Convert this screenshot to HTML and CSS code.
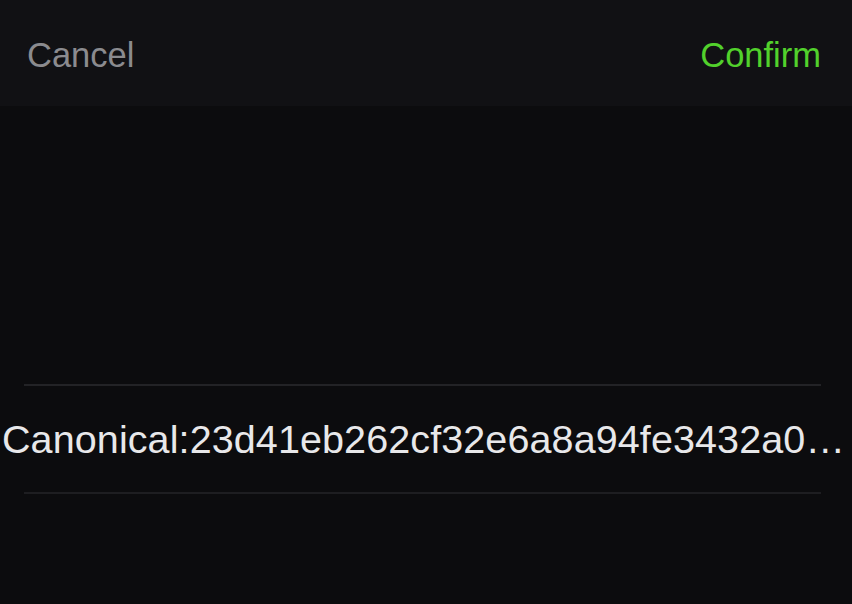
FILE: index.html
```html
<!DOCTYPE html>
<html>
<head>
<meta charset="utf-8">
<link rel="stylesheet" href="styles.css">
</head>
<body>
<div class="sheet">
  <header class="toolbar">
    <span class="btn cancel">Cancel</span>
    <span class="btn confirm">Confirm</span>
  </header>
  <main class="picker">
    <div class="row">
      <div class="value">Canonical:23d41eb262cf32e6a8a94fe3432a0…</div>
    </div>
  </main>
</div>
</body>
</html>
```
FILE: styles.css
```css
html, body {
  margin: 0;
  padding: 0;
  background: #0c0c0e;
}
.sheet {
  width: 852px;
  height: 604px;
  display: flex;
  flex-direction: column;
  font-family: "Liberation Sans", Arial, sans-serif;
  overflow: hidden;
}
.toolbar {
  height: 106px;
  background: #111114;
  display: flex;
  align-items: center;
  justify-content: space-between;
  padding: 4px 31px 0 27px;
  box-sizing: border-box;
}
.btn {
  font-size: 34.5px;
  line-height: 1;
}
.cancel { color: #8b8b8f; }
.confirm { color: #52d12c; }
.picker {
  flex: 1;
  display: flex;
  flex-direction: column;
  padding-top: 278px;
}
.row {
  margin: 0 31px 0 24px;
  height: 110px;
  border-top: 2px solid #232326;
  border-bottom: 2px solid #1e1e21;
  box-sizing: border-box;
  display: flex;
  align-items: center;
  justify-content: center;
}
.value {
  flex: none;
  margin: 0 -26px 0 -24px;
  color: #e8e8ea;
  font-size: 39.5px;
  letter-spacing: 0.1px;
  white-space: nowrap;
}
```
